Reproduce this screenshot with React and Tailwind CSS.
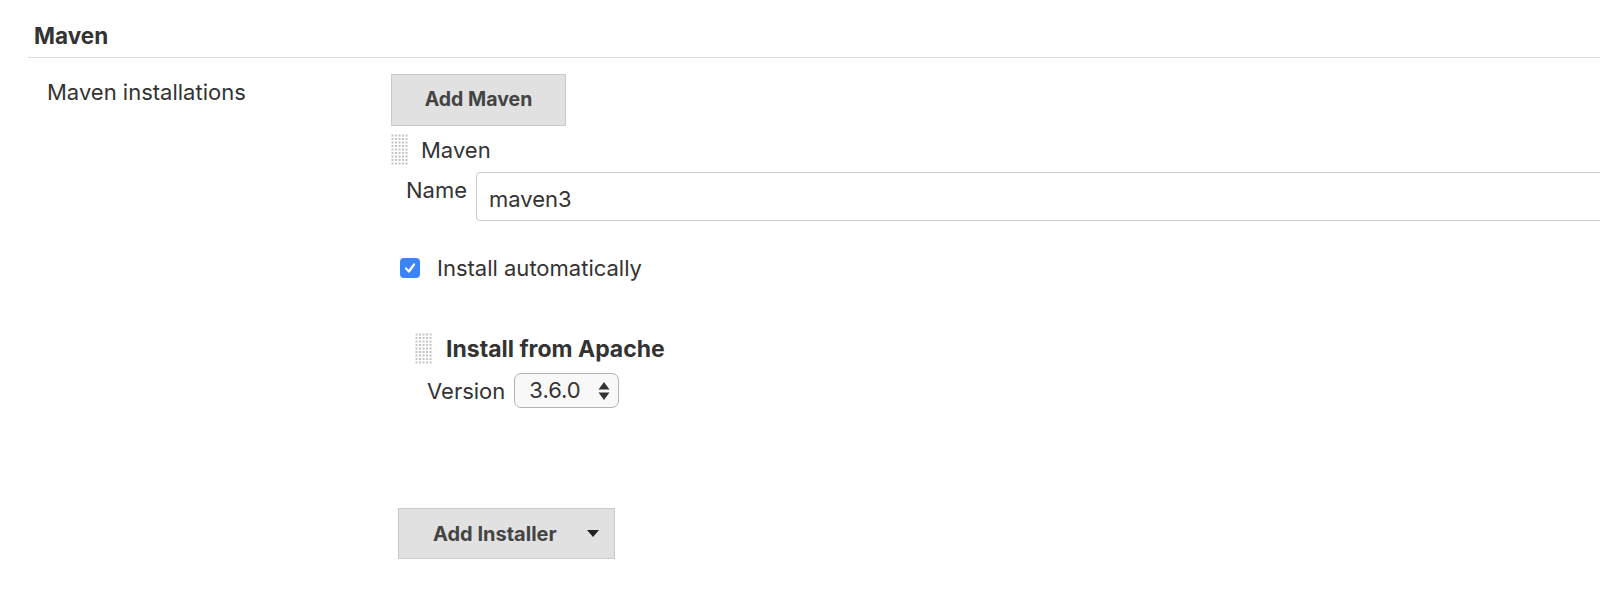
import React from 'react';

function DragHandle({ className = '' }) {
  // dotted grip used by Jenkins repeatable blocks
  const dots = [];
  for (let r = 0; r < 9; r++) {
    for (let c = 0; c < 5; c++) {
      dots.push(<rect key={`${r}-${c}`} x={c * 3.5 + 0.5} y={r * 3.5 + 0.5} width="2" height="2" fill="#c4c4c4" />);
    }
  }
  return (
    <svg width="18" height="32" viewBox="0 0 18 32" className={className}>
      {dots}
    </svg>
  );
}

function Checkbox() {
  return (
    <span className="flex h-[20px] w-[20px] items-center justify-center rounded-[4px] bg-[#3b83f6]">
      <svg width="14" height="14" viewBox="0 0 14 14">
        <path d="M3 7.5 L6 10.5 L11 3.5" fill="none" stroke="#fff" strokeWidth="2.2" strokeLinecap="round" strokeLinejoin="round" />
      </svg>
    </span>
  );
}

export default function App() {
  return (
    <div className="h-[616px] w-[1600px] overflow-hidden bg-white font-['Inter','Liberation_Sans',sans-serif] text-[#333]">
      <div className="pl-[28px] pt-[22px]">
        <h2 className="pl-[6px] text-[22.5px] font-bold leading-[28px] text-[#333]">Maven</h2>
        <div className="mt-[7px] h-px bg-[#dcdcdc]" />
        <div className="flex pt-[16px]">
          <div className="w-[363px] shrink-0 pl-[19px] pt-[5px] text-[22px] leading-[26px]">Maven installations</div>
          <div className="flex-1">
            <button className="h-[52px] w-[175px] border border-[#cacaca] bg-[#e1e1e1] text-[19.5px] font-bold text-[#444]">
              Add Maven
            </button>

            <div className="mt-[8px] flex items-start">
              <DragHandle />
              <span className="ml-[12px] mt-[3px] text-[22px] leading-[26px]">Maven</span>
            </div>

            <div className="mt-[6px] flex items-start">
              <span className="ml-[15px] mt-[5px] text-[22px] leading-[26px]">Name</span>
              <div className="ml-[9px] flex h-[49px] w-[1200px] items-center rounded-[4px] border border-[#cccccc] bg-white pl-[12px] pt-[5px] text-[22px]">
                maven3
              </div>
            </div>

            <div className="mt-[34px] flex items-center pl-[9px]">
              <Checkbox />
              <span className="ml-[17px] text-[22px] leading-[26px]">Install automatically</span>
            </div>

            <div className="mt-[52px] pl-[24px]">
              <div className="flex items-center">
                <DragHandle />
                <span className="ml-[13px] text-[23px] font-bold leading-[26px]">Install from Apache</span>
              </div>
              <div className="mt-[8px] flex items-center">
                <span className="ml-[12px] text-[22px] leading-[26px]">Version</span>
                <div className="ml-[9px] flex h-[35px] w-[105px] items-center justify-between rounded-[7px] border border-[#b4b4b4] bg-[#f8f8f8] pl-[14px] pr-[8px] text-[22px]">
                  <span>3.6.0</span>
                  <svg width="12" height="20" viewBox="0 0 12 20">
                    <path d="M6 1 L11.5 8.5 L0.5 8.5 Z" fill="#333" />
                    <path d="M6 19 L11.5 11.5 L0.5 11.5 Z" fill="#333" />
                  </svg>
                </div>
              </div>
            </div>

            <button className="mt-[100px] ml-[7px] flex h-[51px] w-[217px] items-center border border-[#cacaca] bg-[#e1e1e1] pl-[34px] text-[20px] font-bold text-[#444]">
              <span>Add Installer</span>
              <svg width="12" height="7" viewBox="0 0 12 7" className="ml-[30px]">
                <path d="M0 0 L12 0 L6 7 Z" fill="#222" />
              </svg>
            </button>
          </div>
        </div>
      </div>
    </div>
  );
}
